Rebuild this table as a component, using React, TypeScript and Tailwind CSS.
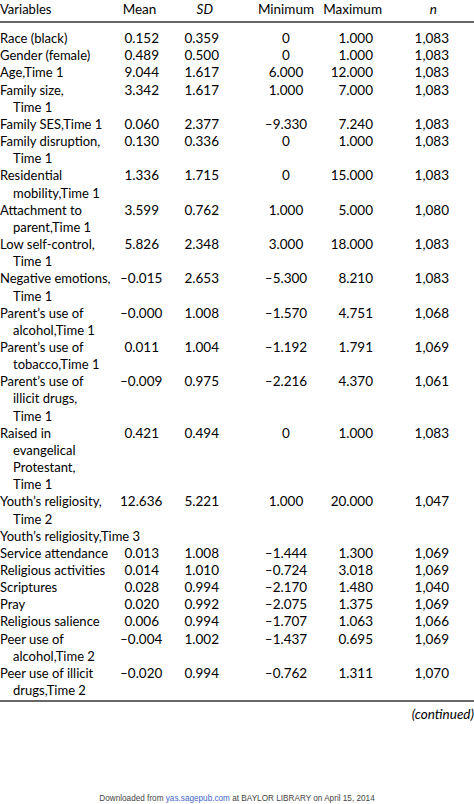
const rows: { label: string[]; v?: string[] }[] = [
  { label: ["Race (black)"], v: ["0.152", "0.359", "0", "1.000", "1,083"] },
  { label: ["Gender (female)"], v: ["0.489", "0.500", "0", "1.000", "1,083"] },
  { label: ["Age,Time 1"], v: ["9.044", "1.617", "6.000", "12.000", "1,083"] },
  { label: ["Family size,", "Time 1"], v: ["3.342", "1.617", "1.000", "7.000", "1,083"] },
  { label: ["Family SES,Time 1"], v: ["0.060", "2.377", "–9.330", "7.240", "1,083"] },
  { label: ["Family disruption,", "Time 1"], v: ["0.130", "0.336", "0", "1.000", "1,083"] },
  { label: ["Residential", "mobility,Time 1"], v: ["1.336", "1.715", "0", "15.000", "1,083"] },
  { label: ["Attachment to", "parent,Time 1"], v: ["3.599", "0.762", "1.000", "5.000", "1,080"] },
  { label: ["Low self-control,", "Time 1"], v: ["5.826", "2.348", "3.000", "18.000", "1,083"] },
  { label: ["Negative emotions,", "Time 1"], v: ["–0.015", "2.653", "–5.300", "8.210", "1,083"] },
  { label: ["Parent’s use of", "alcohol,Time 1"], v: ["–0.000", "1.008", "–1.570", "4.751", "1,068"] },
  { label: ["Parent’s use of", "tobacco,Time 1"], v: ["0.011", "1.004", "–1.192", "1.791", "1,069"] },
  { label: ["Parent’s use of", "illicit drugs,", "Time 1"], v: ["–0.009", "0.975", "–2.216", "4.370", "1,061"] },
  { label: ["Raised in", "evangelical", "Protestant,", "Time 1"], v: ["0.421", "0.494", "0", "1.000", "1,083"] },
  { label: ["Youth’s religiosity,", "Time 2"], v: ["12.636", "5.221", "1.000", "20.000", "1,047"] },
  { label: ["Youth’s religiosity,Time 3"] },
  { label: ["Service attendance"], v: ["0.013", "1.008", "–1.444", "1.300", "1,069"] },
  { label: ["Religious activities"], v: ["0.014", "1.010", "–0.724", "3.018", "1,069"] },
  { label: ["Scriptures"], v: ["0.028", "0.994", "–2.170", "1.480", "1,040"] },
  { label: ["Pray"], v: ["0.020", "0.992", "–2.075", "1.375", "1,069"] },
  { label: ["Religious salience"], v: ["0.006", "0.994", "–1.707", "1.063", "1,066"] },
  { label: ["Peer use of", "alcohol,Time 2"], v: ["–0.004", "1.002", "–1.437", "0.695", "1,069"] },
  { label: ["Peer use of illicit", "drugs,Time 2"], v: ["–0.020", "0.994", "–0.762", "1.311", "1,070"] },
];

const cols = "grid grid-cols-[120px_39px_60px_104px_50px_76px]";

export default function App() {
  return (
    <div className="h-[804px] w-[474px] overflow-hidden bg-white font-['Lato',sans-serif] text-[13.5px] leading-[17.15px] text-black">
      {/* Header */}
      <div className={`${cols} pt-[1px]`}>
        <div className="text-[13px]">Variables</div>
        <div className="text-center">Mean</div>
        <div className="pr-[6px] text-right italic">SD</div>
        <div className="pl-[30px] text-center">Minimum</div>
        <div className="flex justify-end">
          <span className="-mr-[9px]">Maximum</span>
        </div>
        <div className="pr-[12px] text-right italic">n</div>
      </div>
      <div className="mt-[3px] h-[2px] bg-[#666]" />

      {/* Body */}
      <div className="pt-[7px]">
        {rows.map((r) =>
          r.v ? (
            <div key={r.label.join(" ")} className={`${cols} whitespace-nowrap`}>
              <div className="text-[13px]">
                {r.label.map((l, i) => (
                  <div key={i} className={i > 0 ? "pl-[13px]" : ""}>
                    {l}
                  </div>
                ))}
              </div>
              <div className="text-right">{r.v[0]}</div>
              <div className="text-right">{r.v[1]}</div>
              <div className="pl-[30px] text-center">{r.v[2]}</div>
              <div className="text-right">{r.v[3]}</div>
              <div className="text-right">{r.v[4]}</div>
            </div>
          ) : (
            <div key={r.label[0]} className="whitespace-nowrap text-[13px]">
              {r.label[0]}
            </div>
          )
        )}
      </div>
      <div className="mt-[1px] h-[2px] bg-[#666]" />

      <div className="mt-[4px] text-right italic">(continued)</div>

      <div className="mt-[71px] text-center font-['Liberation_Sans',sans-serif] text-[8.2px] leading-[10px] text-[#444]">
        Downloaded from <span className="text-[#4466cc]">yas.sagepub.com</span> at BAYLOR LIBRARY on April 15, 2014
      </div>
    </div>
  );
}
